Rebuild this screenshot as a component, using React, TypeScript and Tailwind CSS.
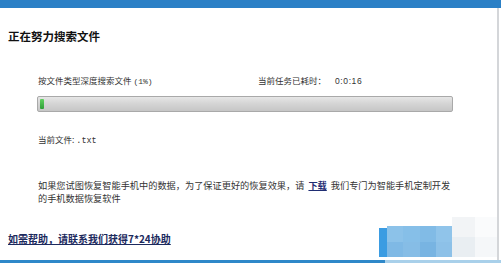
import React from "react";

const cjk = "font-['Noto_Sans_CJK_SC','Noto_Sans',sans-serif]";

export default function App() {
  return (
    <div className={`w-[501px] h-[263px] bg-white flex flex-col overflow-hidden ${cjk}`}>
      {/* top window bar */}
      <div className="h-[8px] bg-[#2b80c6] shrink-0" />

      <div className="flex-1 flex flex-col border-r-2 border-[#d4d6d9] mr-[2px]">
        {/* title */}
        <h1 className="mt-[21px] ml-[8px] text-[11.5px] leading-[14px] font-bold text-[#111]">
          正在努力搜索文件
        </h1>

        {/* status row */}
        <div className="mt-[31px] ml-[38px] flex text-[8.5px] leading-[12px] text-[#333]">
          <span className="w-[220px]">
            按文件类型深度搜索文件 <span className="font-['Liberation_Mono',monospace] text-[8px]">(1%)</span>
          </span>
          <span>
            当前任务已耗时：
            <span className="ml-[9px] font-['Liberation_Sans',sans-serif] tracking-[0.6px]">0:0:16</span>
          </span>
        </div>

        {/* progress bar */}
        <div className="mt-[8px] ml-[37px] w-[416px] h-[16px] border border-[#a9a9a9] rounded-[2px] bg-gradient-to-b from-[#e6e6e6] via-[#d4d4d4] to-[#c6c6c6] p-[2px] flex">
          <div className="w-[4px] h-full bg-gradient-to-b from-[#5fd15f] to-[#2e9e38] rounded-[1px]" />
        </div>

        {/* current file */}
        <div className="mt-[21px] ml-[38px] text-[8.5px] leading-[12px] text-[#333]">
          当前文件: <span className="font-['Liberation_Mono',monospace]">.txt</span>
        </div>

        {/* notice */}
        <div className="mt-[32px] ml-[38px] text-[9.2px] leading-[13px] text-[#333]">
          <div className="flex items-center whitespace-nowrap">
            <span>如果您试图恢复智能手机中的数据，为了保证更好的恢复效果，请</span>
            <span className="mx-[4px] underline text-[#1f2d73] font-bold">下载</span>
            <span>我们专门为智能手机定制开发</span>
          </div>
          <div>的手机数据恢复软件</div>
        </div>

        {/* bottom row */}
        <div className="mt-auto flex items-end justify-between">
          <a className="ml-[8px] mb-[14px] text-[10px] leading-[14px] font-bold text-[#1c2a5e] underline">
            如需帮助，请联系我们获得7*24协助
          </a>
          {/* pixelated button */}
          <div className="flex items-end mb-[3px]">
            <div className="w-[8px] h-[29px] bg-[#3b9ce2]" />
            <div className="w-[65px] h-[31px] grid grid-cols-4 grid-rows-2">
              <div className="bg-[#8cc2e9]" />
              <div className="bg-[#86bfe8]" />
              <div className="bg-[#81bbe6]" />
              <div className="bg-[#90c4ea]" />
              <div className="bg-[#7fb9e5]" />
              <div className="bg-[#86bde6]" />
              <div className="bg-[#78b4e2]" />
              <div className="bg-[#8dc1e8]" />
            </div>
            <div className="w-[45px] h-[40px] grid grid-cols-2 grid-rows-2">
              <div className="bg-[#f2f4f6]" />
              <div className="bg-[#fafbfc]" />
              <div className="bg-[#e9eef2]" />
              <div className="bg-[#f5f7f9]" />
            </div>
          </div>
        </div>
      </div>

      {/* bottom strip */}
      <div className="h-[3px] flex shrink-0">
        <div className="w-[385px] bg-[#2f88c9]" />
        <div className="flex-1 bg-[#a9d0ea]" />
      </div>
    </div>
  );
}
